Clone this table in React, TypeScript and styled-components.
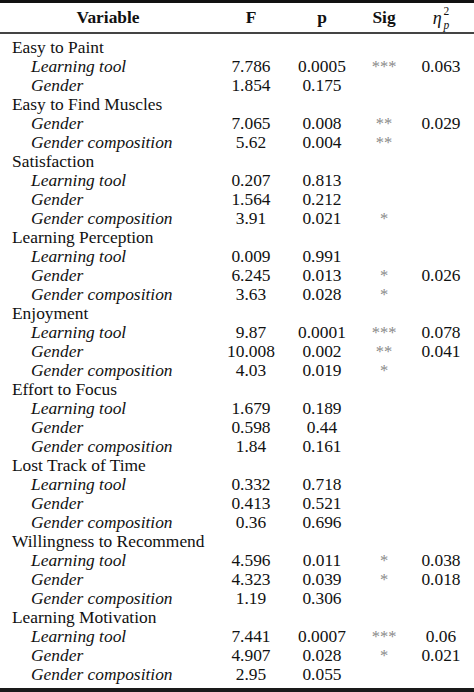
import React from "react";
import styled, { createGlobalStyle } from "styled-components";

const serif = `"Liberation Serif", "Times New Roman", serif`;

const Global = createGlobalStyle`
  html, body { margin: 0; padding: 0; background: #fff; }
  body { font-family: ${serif}; color: #111; }
`;

const Table = styled.div`
  width: 474px;
  height: 692px;
  box-sizing: border-box;
  border-top: 3px solid #111;
  border-bottom: 4px solid #1a1a1a;
  display: flex;
  flex-direction: column;
  font-family: ${serif};
`;

const cols = "216px 70px 72px 52px 62px";

const HeadRow = styled.div`
  display: grid;
  grid-template-columns: ${cols};
  height: 29px;
  align-items: center;
  border-bottom: 2px solid #444;
  font-weight: bold;
  font-size: 17.4px;
`;

const HeadCell = styled.div`
  text-align: center;
  line-height: 1;
`;

const Eta = styled.span`
  font-weight: normal;
  font-style: italic;
  display: inline-flex;
  align-items: center;
  font-size: 18px;
  height: 28px;
`;

const Scripts = styled.span`
  display: inline-flex;
  flex-direction: column;
  align-items: flex-start;
  gap: 2px;
  font-size: 11.5px;
  line-height: 12px;
  margin-left: 2px;
`;

const Sup = styled.span`
  font-style: normal;
`;

const Body = styled.div`
  padding: 4px 0;
  display: flex;
  flex-direction: column;
`;

const Row = styled.div`
  display: grid;
  grid-template-columns: ${cols};
  height: 19px;
  align-items: center;
  font-size: 17.4px;
  line-height: 19px;
`;

const Label = styled.div<{ $sub?: boolean }>`
  padding-left: ${(p) => (p.$sub ? "31px" : "12px")};
  font-style: ${(p) => (p.$sub ? "italic" : "normal")};
  white-space: nowrap;
`;

const Num = styled.div`
  text-align: center;
`;

const Stars = styled.div`
  text-align: center;
  color: #8a8a8a;
  font-size: 16.5px;
`;

type Item = [string, string, string, string?, string?];
type Group = { name: string; items: Item[] };

const data: Group[] = [
  { name: "Easy to Paint", items: [["Learning tool", "7.786", "0.0005", "***", "0.063"], ["Gender", "1.854", "0.175"]] },
  { name: "Easy to Find Muscles", items: [["Gender", "7.065", "0.008", "**", "0.029"], ["Gender composition", "5.62", "0.004", "**"]] },
  { name: "Satisfaction", items: [["Learning tool", "0.207", "0.813"], ["Gender", "1.564", "0.212"], ["Gender composition", "3.91", "0.021", "*"]] },
  { name: "Learning Perception", items: [["Learning tool", "0.009", "0.991"], ["Gender", "6.245", "0.013", "*", "0.026"], ["Gender composition", "3.63", "0.028", "*"]] },
  { name: "Enjoyment", items: [["Learning tool", "9.87", "0.0001", "***", "0.078"], ["Gender", "10.008", "0.002", "**", "0.041"], ["Gender composition", "4.03", "0.019", "*"]] },
  { name: "Effort to Focus", items: [["Learning tool", "1.679", "0.189"], ["Gender", "0.598", "0.44"], ["Gender composition", "1.84", "0.161"]] },
  { name: "Lost Track of Time", items: [["Learning tool", "0.332", "0.718"], ["Gender", "0.413", "0.521"], ["Gender composition", "0.36", "0.696"]] },
  { name: "Willingness to Recommend", items: [["Learning tool", "4.596", "0.011", "*", "0.038"], ["Gender", "4.323", "0.039", "*", "0.018"], ["Gender composition", "1.19", "0.306"]] },
  { name: "Learning Motivation", items: [["Learning tool", "7.441", "0.0007", "***", "0.06"], ["Gender", "4.907", "0.028", "*", "0.021"], ["Gender composition", "2.95", "0.055"]] },
];

export default function App() {
  return (
    <>
      <Global />
      <Table>
        <HeadRow>
          <HeadCell>Variable</HeadCell>
          <HeadCell>F</HeadCell>
          <HeadCell>p</HeadCell>
          <HeadCell>Sig</HeadCell>
          <HeadCell>
            <Eta>
              η
              <Scripts>
                <Sup>2</Sup>
                <span>p</span>
              </Scripts>
            </Eta>
          </HeadCell>
        </HeadRow>
        <Body>
          {data.map((g) => (
            <React.Fragment key={g.name}>
              <Row>
                <Label>{g.name}</Label>
              </Row>
              {g.items.map((it, i) => (
                <Row key={i}>
                  <Label $sub>{it[0]}</Label>
                  <Num>{it[1]}</Num>
                  <Num>{it[2]}</Num>
                  <Stars>{it[3] ?? ""}</Stars>
                  <Num>{it[4] ?? ""}</Num>
                </Row>
              ))}
            </React.Fragment>
          ))}
        </Body>
      </Table>
    </>
  );
}
